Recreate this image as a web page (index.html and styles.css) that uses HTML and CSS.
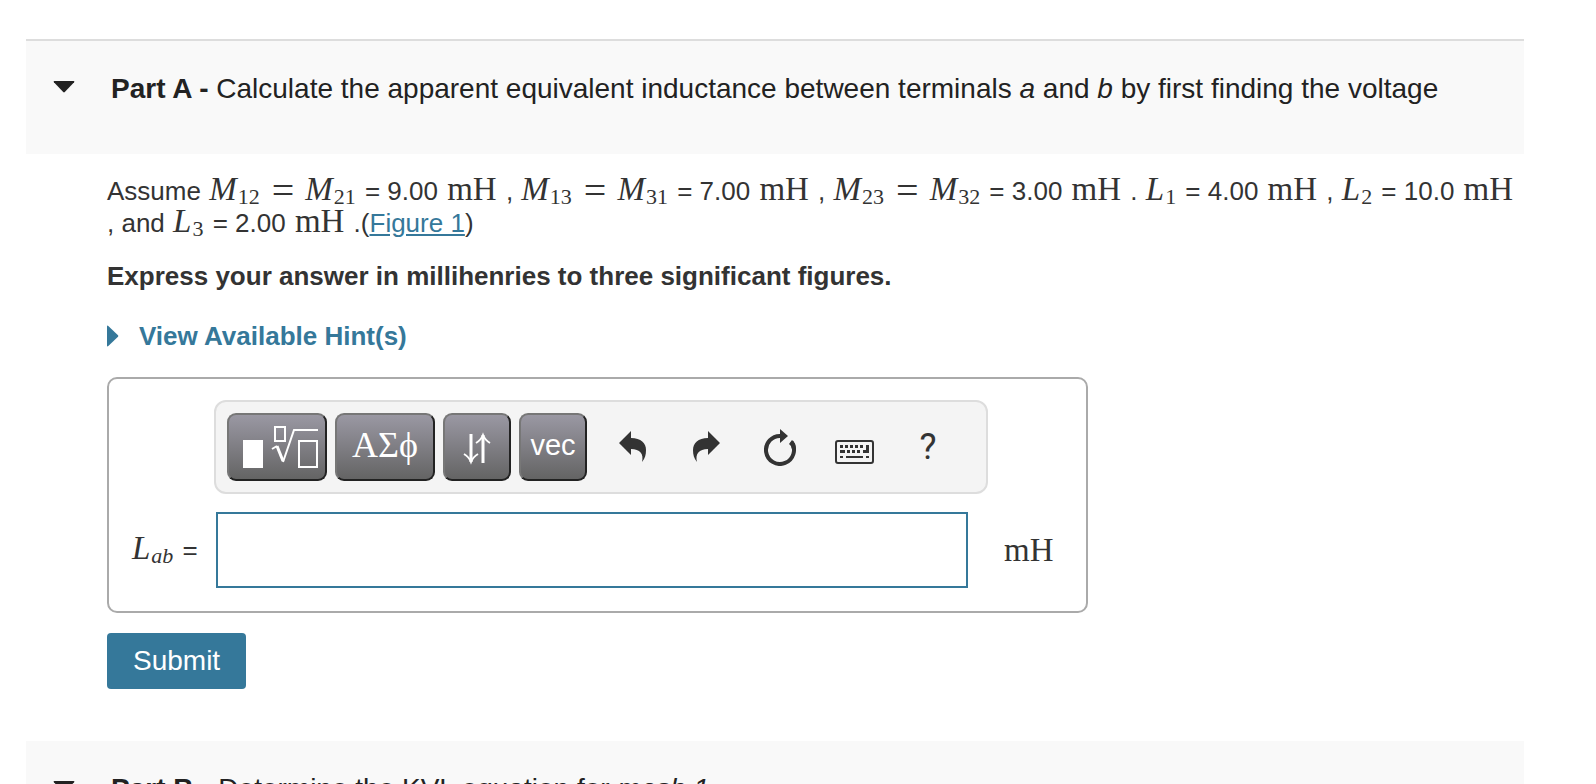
FILE: index.html
```
<!DOCTYPE html>
<html lang="en">
<head>
  <meta charset="utf-8">
  <title>Part A</title>
  <link rel="stylesheet" href="styles.css">
</head>
<body>
  <main class="page">
    <section>
      <header class="part-header first">
        <button class="toggle" aria-label="Collapse Part A">
          <svg width="22" height="12" viewBox="0 0 22 12"><path d="M1.500 0h19q1.500 0 .6 1.300l-9.300 9.700q-.8.8-1.600 0L.9 1.300Q0 0 1.500 0z"/></svg>
        </button>
        <h2 class="part-title"><b>Part A -</b> Calculate the apparent equivalent inductance between terminals <i>a</i> and <i>b</i> by first finding the voltage</h2>
      </header>

      <div class="part-body">
        <p class="text">Assume
          <span class="math"><i>M</i><sub>12</sub><span class="eq">=</span><i>M</i><sub>21</sub></span> = 9.00 <span class="unit">mH</span> ,
          <span class="math"><i>M</i><sub>13</sub><span class="eq">=</span><i>M</i><sub>31</sub></span> = 7.00 <span class="unit">mH</span> ,
          <span class="math"><i>M</i><sub>23</sub><span class="eq">=</span><i>M</i><sub>32</sub></span> = 3.00 <span class="unit">mH</span> .
          <span class="math"><i>L</i><sub>1</sub></span> = 4.00 <span class="unit">mH</span> ,
          <span class="math"><i>L</i><sub>2</sub></span> = 10.0 <span class="unit">mH</span>
          , and <span class="math"><i>L</i><sub>3</sub></span> = 2.00 <span class="unit">mH</span> .(<a href="#figure1">Figure 1</a>)</p>
        <p class="instructions">Express your answer in millihenries to three significant figures.</p>
        <button class="hints">
          <svg width="12" height="22" viewBox="0 0 12 22"><path d="M0 1.500Q0 0 1.300.9l9.700 9.300q.8.8 0 1.600L1.300 21.100Q0 22 0 20.500z"/></svg>
          View Available Hint(s)
        </button>

        <form class="answer">
          <div class="toolbar">
            <button type="button" class="key wide" aria-label="Templates">
              <svg class="line" width="96" height="64" viewBox="0 0 96 64">
                <path class="solid" d="M15 26h18v26H15z"/>
                <path d="M46 12h10v14H46z"/>
                <path d="M48 31l6 15" stroke-width="3"/>
                <path d="M43 34l5-3M54 47L65 15h24"/>
                <path d="M70 26h18v26H70z"/>
              </svg>
            </button>
            <button type="button" class="key wide greek">ΑΣϕ</button>
            <button type="button" class="key" aria-label="Subscript and superscript">
              <svg class="line" width="64" height="64" viewBox="0 0 64 64">
                <path d="M26 19v28M38 48V20" stroke-width="3"/>
                <path d="M19 39q5 3 7 8 2-5 7-8M31 28q5-3 7-8 2 5 7 8"/>
              </svg>
            </button>
            <button type="button" class="key vec">vec</button>
            <div class="tools">
              <button type="button" class="tool" aria-label="Undo">
                <svg width="27" height="36" viewBox="0 0 27 36"><path d="M0 14L12 2v7c10 0 15 5 15 12 0 5-1 8-4 12 2-8-2-13-11-13v6z"/></svg>
              </button>
              <button type="button" class="tool" aria-label="Redo">
                <svg width="27" height="36" viewBox="0 0 27 36"><path d="M27 14L15 2v7C5 9 0 14 0 21c0 5 1 8 4 12-2-8 2-13 11-13v6z"/></svg>
              </button>
              <button type="button" class="tool" aria-label="Reset">
                <svg width="32" height="38" viewBox="0 0 32 38"><path class="ring" d="M17 8a14 14 0 1 0 10.500 6"/><path d="M16 1l8 7-8 7zM25 16l3-4q4 3 4 9h-4q0-3-3-5z"/></svg>
              </button>
              <button type="button" class="tool" aria-label="Keyboard shortcuts">
                <svg width="39" height="36" viewBox="0 0 39 36"><path fill-rule="evenodd" d="M3 11h33q3 0 3 3v18q0 3-3 3H3q-3 0-3-3V14q0-3 3-3zM3 13q-1 0-1 1v18q0 1 1 1h33q1 0 1-1V14q0-1-1-1z"/><path d="M5 16h3v3H5zM10 16h3v3h-3zM15 16h3v3h-3zM20 16h3v3h-3zM25 16h3v3h-3zM31 16h3v8h-6v-3h3zM5 21h5v3H5zM12 21h3v3h-3zM17 21h3v3h-3zM22 21h3v3h-3zM5 27h3v2H5zM11 27h17v2H11zM31 27h3v2h-3z"/></svg>
              </button>
              <button type="button" class="tool help" aria-label="Help">?</button>
            </div>
          </div>
          <label class="answer-label" for="answer"><span class="math"><i>L</i><sub><i>ab</i></sub></span> =</label>
          <input id="answer" class="answer-input" type="text" autocomplete="off">
          <span class="unit">mH</span>
        </form>

        <button class="submit">Submit</button>
      </div>
    </section>

    <section>
      <header class="part-header">
        <button class="toggle" aria-label="Collapse Part B">
          <svg width="22" height="12" viewBox="0 0 22 12"><path d="M1.500 0h19q1.500 0 .6 1.300l-9.300 9.700q-.8.8-1.600 0L.9 1.300Q0 0 1.500 0z"/></svg>
        </button>
        <h2 class="part-title"><b>Part B -</b> Determine the KVL equation for <i>mesh 1</i></h2>
      </header>
    </section>
  </main>
</body>
</html>
```
FILE: styles.css
```
/* page */
* {
  box-sizing: border-box;
}

body {
  margin: 0;
  height: 100vh;
  overflow: hidden;
  background-color: #fff;
  color: #333;
  font-family: "Liberation Sans", Arial, sans-serif;
  font-size: 26px;
  line-height: 32px;
}

button {
  font: inherit;
  cursor: pointer;
}

svg {
  display: block;
  fill: currentColor;
}

.page {
  margin: 39px 72px 0 26px;
}

/* part headers */
.part-header {
  display: flex;
  align-items: flex-start;
  min-height: 113px;
  padding: 32px 28px 28px 27px;
  background-color: #f9f9f9;
  color: #222;
}

.part-header.first {
  border-top: 2px solid #ddd;
  min-height: 115px;
}

.toggle {
  width: 58px;
  padding: 8px 0 0;
  border: none;
  background: none;
  color: #222;
}

.part-title {
  margin: 0;
  font-size: 28px;
  font-weight: normal;
}

/* question text */
.part-body {
  padding: 21px 0 52px 81px;
}

.text,
.instructions {
  margin: 0 0 21px;
}

.instructions {
  margin-bottom: 28px;
  font-weight: bold;
}

.text a {
  color: #35789a;
}

.math,
.unit {
  font-family: "Liberation Serif", "Times New Roman", serif;
  font-size: 33px;
  line-height: 24px;
}

.math {
  margin: 0 2px 0 1px;
  white-space: nowrap;
}

.text .unit {
  margin: 0 2px;
}

.math > i {
  padding-right: 1px;
}

.math sub {
  font-size: 22px;
  line-height: 16px;
  vertical-align: -4px;
}

.eq {
  padding: 0 11px 0 12px;
  font-size: 40px;
  line-height: 16px;
  vertical-align: -4px;
}

.hints {
  display: flex;
  align-items: center;
  gap: 20px;
  margin-bottom: 25px;
  padding: 0;
  border: none;
  background: none;
  color: #35789a;
  font-weight: bold;
}

/* answer box */
.answer {
  display: grid;
  grid-template-columns: 83px 1fr 100px;
  align-items: center;
  row-gap: 18px;
  max-width: 981px;
  padding: 21px 18px 23px 22px;
  border: 2px solid #aaa;
  border-radius: 10px;
}

.toolbar {
  grid-column: 2 / 4;
  display: flex;
  align-items: center;
  gap: 8px;
  margin-right: 80px;
  padding: 11px;
  border: 2px solid #ddd;
  border-radius: 12px;
  background-color: #f4f4f4;
}

.key {
  display: flex;
  align-items: center;
  justify-content: center;
  width: 68px;
  height: 68px;
  padding: 0;
  border: 2px solid;
  border-color: #777 #222 #222 #777;
  border-radius: 9px;
  background: linear-gradient(#9a98a3, #646464);
  color: #fff;
}

.key.wide {
  width: 100px;
}

.key.greek {
  padding-bottom: 5px;
  font-family: "Liberation Serif", "Times New Roman", serif;
  font-size: 36px;
}

.key.vec {
  padding-bottom: 5px;
  font-size: 29px;
}

.line {
  fill: none;
  stroke: #fff;
  stroke-width: 2px;
}

.solid {
  fill: #fff;
}

.ring {
  fill: none;
  stroke: #333;
  stroke-width: 4px;
}

.tools {
  display: flex;
  align-items: center;
}

.tool {
  display: flex;
  justify-content: center;
  width: 74px;
  padding: 0;
  border: none;
  background: none;
  color: #333;
}

.help {
  font-family: Roboto, sans-serif;
  font-size: 36px;
}

.answer-input {
  width: auto;
  height: 76px;
  margin: 0 0 0 2px;
  padding: 0 12px;
  border: 2px solid #35789a;
  background-color: #fff;
  font-size: 26px;
}

.answer > .unit {
  padding-left: 36px;
}

.submit {
  height: 56px;
  margin-top: 20px;
  padding: 0 26px;
  border: none;
  border-radius: 4px;
  background-color: #35789a;
  color: #fff;
  font-size: 28px;
}
```
